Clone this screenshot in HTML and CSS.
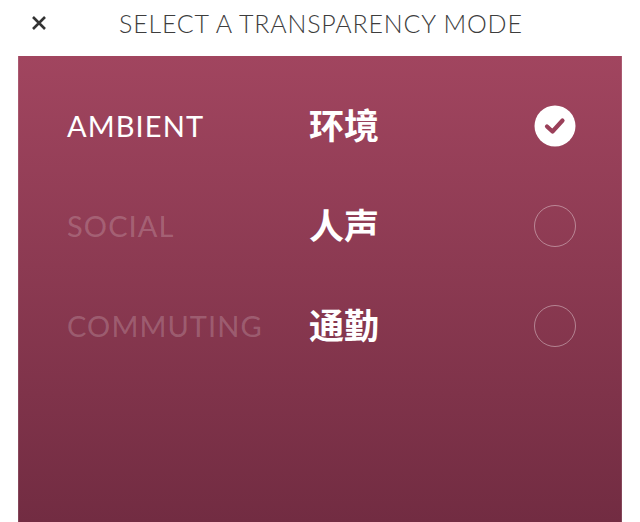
FILE: index.html
```html
<!DOCTYPE html>
<html>
<head>
<meta charset="utf-8">
<link rel="stylesheet" href="styles.css">
</head>
<body>
<header class="top">
  <span class="close">
    <svg width="18" height="18" viewBox="0 0 18 18"><path d="M3 3L15 15M15 3L3 15" stroke="#333" stroke-width="2.6" stroke-linecap="butt"/></svg>
  </span>
  <h1 class="title">SELECT A TRANSPARENCY MODE</h1>
</header>
<main class="panel">
  <div class="row">
    <span class="label active">AMBIENT</span>
    <span class="cn">环境</span>
    <span class="radio checked">
      <svg width="42" height="42" viewBox="0 0 42 42"><circle cx="21" cy="21" r="20.5" fill="#fff"/><path d="M13 21.5L18.5 26.5L28.5 15.5" fill="none" stroke="#9a3f59" stroke-width="4.2" stroke-linecap="round" stroke-linejoin="round"/></svg>
    </span>
  </div>
  <div class="row">
    <span class="label">SOCIAL</span>
    <span class="cn">人声</span>
    <span class="radio"></span>
  </div>
  <div class="row">
    <span class="label">COMMUTING</span>
    <span class="cn">通勤</span>
    <span class="radio"></span>
  </div>
</main>
</body>
</html>
```
FILE: styles.css
```css
html, body {
  margin: 0;
  padding: 0;
  background: #fff;
  height: 100%;
  overflow: hidden;
}
body {
  display: flex;
  flex-direction: column;
  font-family: "Lato", "Noto Sans CJK SC", sans-serif;
}
.top {
  height: 56px;
  flex: none;
  display: flex;
  align-items: center;
  padding-left: 30px;
  box-sizing: border-box;
  padding-bottom: 10px;
}
.close {
  width: 18px;
  height: 18px;
  display: flex;
}
.title {
  margin: 0 0 0 71px;
  font-weight: 300;
  font-size: 25px;
  color: #3d3d3d;
  letter-spacing: 0.8px;
  white-space: nowrap;
}
.panel {
  flex: 1;
  margin: 0 18px;
  background: linear-gradient(to bottom, #a1455f 0%, #8c3a52 45%, #722c42 100%);
  padding: 20px 0 0 49px;
  box-shadow: inset 1px 0 0 rgba(255,255,255,0.12), inset -1px 0 0 rgba(255,255,255,0.12);
}
.row {
  height: 100px;
  display: flex;
  align-items: center;
}
.label {
  width: 242px;
  font-size: 29px;
  font-weight: 400;
  color: rgba(255,255,255,0.2);
  letter-spacing: 1.1px;
  margin-bottom: 2px;
}
.label.active {
  color: #fff;
}
.cn {
  width: 225px;
  font-family: "Noto Sans CJK SC", sans-serif;
  font-weight: 700;
  font-size: 35px;
  color: #fff;
  margin-bottom: 5px;
}
.radio {
  width: 42px;
  height: 42px;
  box-sizing: border-box;
  border-radius: 50%;
  border: 1.5px solid rgba(255,255,255,0.38);
  display: flex;
}
.radio.checked {
  border: none;
}
```
